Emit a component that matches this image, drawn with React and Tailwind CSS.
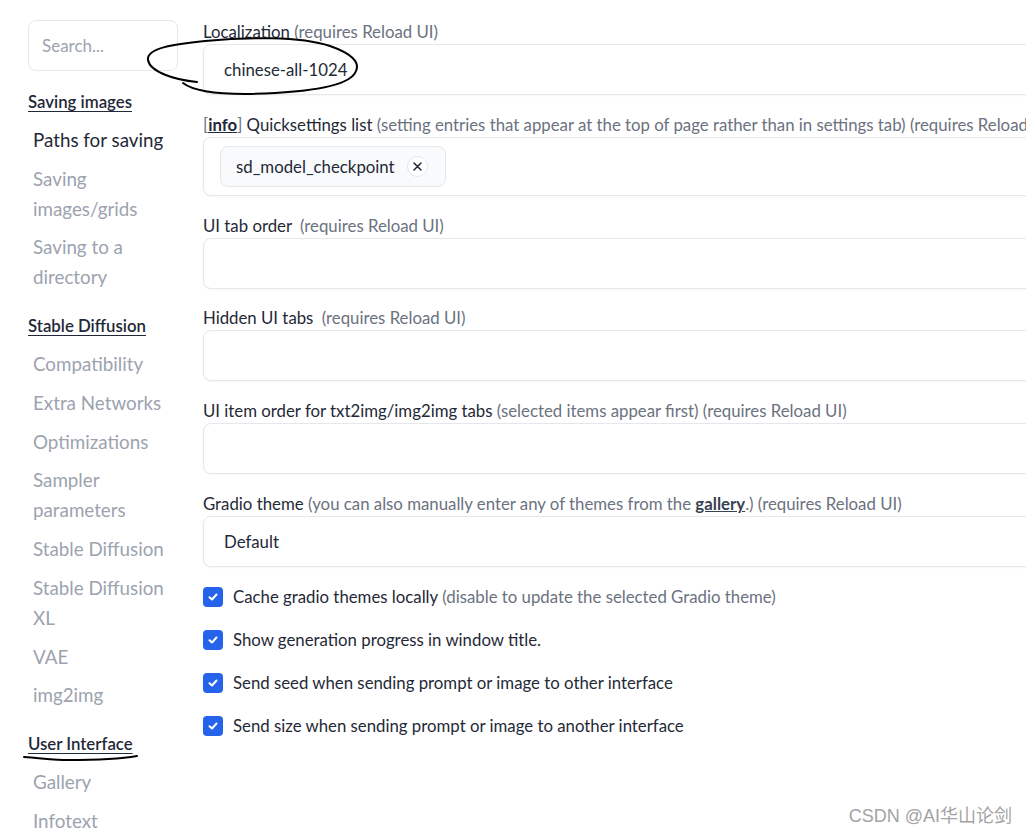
import React from 'react';

const font = { fontFamily: 'Lato, "Noto Sans", sans-serif' };

const Hint = ({ children, className = '' }) => (
  <span className={`text-[#6b7280] ${className}`}>{children}</span>
);

const Field = ({ label, children, tall }) => (
  <div className="mb-[17.8px]">
    <div className="h-[24px] leading-[24px] text-[16.8px] text-[#1f2937] whitespace-nowrap">{label}</div>
    <div
      className={`${tall ? 'h-[59px]' : 'h-[51px]'} w-[880px] rounded-lg border border-[#e5e7eb] bg-white shadow-[0_1px_2px_rgba(0,0,0,0.04)] flex items-center px-[20px] text-[16.8px] text-[#1f2937]`}
    >
      {children}
    </div>
  </div>
);

const Check = ({ children }) => (
  <label className="flex items-center gap-[10px] h-[43px] text-[16.8px] text-[#1f2937] whitespace-nowrap">
    <span className="w-[20px] h-[20px] rounded-[4px] bg-[#2563eb] flex items-center justify-center shrink-0">
      <svg width="12" height="12" viewBox="0 0 12 12" fill="none">
        <path d="M2.5 6.2 L5 8.5 L9.5 3.5" stroke="white" strokeWidth="2" strokeLinecap="round" strokeLinejoin="round" />
      </svg>
    </span>
    {children}
  </label>
);

const SideHead = ({ children, first }) => (
  <div className={`${first ? '' : 'mt-[22px]'} h-[24px] leading-[24px] text-[16.8px] font-semibold text-[#1f2937] underline underline-offset-[3px]`}>
    {children}
  </div>
);

const SideItem = ({ children, active }) => (
  <div className={`pl-[5px] w-[148px] mt-[8.7px] first:mt-[11px] leading-[30px] text-[18.8px] ${active ? 'text-[#1f2937]' : 'text-[#9ca3af]'}`}>
    {children}
  </div>
);

export default function App() {
  return (
    <div className="relative w-[1026px] h-[836px] overflow-hidden bg-white flex" style={font}>
      <aside className="w-[203px] shrink-0 pl-[28px] pt-[20px]">
        <div className="w-[150px] h-[51px] rounded-lg border border-[#e5e7eb] flex items-center px-[13px] text-[17px] text-[#9ca3af]">
          Search...
        </div>
        <div className="mt-[19px]">
          <SideHead first>Saving images</SideHead>
          <div>
            <SideItem active>Paths for saving</SideItem>
            <SideItem>Saving images/grids</SideItem>
            <SideItem>Saving to a directory</SideItem>
          </div>
          <SideHead>Stable Diffusion</SideHead>
          <div>
            <SideItem>Compatibility</SideItem>
            <SideItem>Extra Networks</SideItem>
            <SideItem>Optimizations</SideItem>
            <SideItem>Sampler parameters</SideItem>
            <SideItem>Stable Diffusion</SideItem>
            <SideItem>Stable Diffusion XL</SideItem>
            <SideItem>VAE</SideItem>
            <SideItem>img2img</SideItem>
          </div>
          <SideHead>User Interface</SideHead>
          <div>
            <SideItem>Gallery</SideItem>
            <SideItem>Infotext</SideItem>
          </div>
        </div>
      </aside>

      <main className="flex-1 pt-[20px] min-w-0">
        <Field label={<>Localization <Hint>(requires Reload UI)</Hint></>}>chinese-all-1024</Field>
        <Field
          tall
          label={
            <>
              <Hint>[</Hint>
              <span className="font-bold underline">info</span>
              <Hint>]</Hint> Quicksettings list{' '}
              <Hint>(setting entries that appear at the top of page rather than in settings tab) (requires Reload UI)</Hint>
            </>
          }
        >
          <span className="-ml-[4px] flex items-center gap-[12px] h-[41px] pl-[15px] pr-[17px] rounded-lg border border-[#e5e7eb] bg-[#f9fafb]">
            sd_model_checkpoint
            <span className="w-[21px] h-[21px] rounded-full border border-[#e5e7eb] bg-white flex items-center justify-center">
              <svg width="9" height="9" viewBox="0 0 9 9">
                <path d="M1 1 L8 8 M8 1 L1 8" stroke="#1f2937" strokeWidth="1.5" strokeLinecap="round" />
              </svg>
            </span>
          </span>
        </Field>
        <Field label={<>UI tab order <Hint className="ml-[4px]">(requires Reload UI)</Hint></>} />
        <Field label={<>Hidden UI tabs <Hint className="ml-[4px]">(requires Reload UI)</Hint></>} />
        <Field label={<>UI item order for txt2img/img2img tabs <Hint>(selected items appear first) (requires Reload UI)</Hint></>} />
        <Field
          label={
            <>
              Gradio theme{' '}
              <Hint>
                (you can also manually enter any of themes from the{' '}
                <span className="font-bold underline text-[#374151]">gallery</span>.) (requires Reload UI)
              </Hint>
            </>
          }
        >
          Default
        </Field>
        <div className="mt-[-9.5px]">
          <Check>
            Cache gradio themes locally <Hint className="-ml-[6px]">(disable to update the selected Gradio theme)</Hint>
          </Check>
          <Check>Show generation progress in window title.</Check>
          <Check>Send seed when sending prompt or image to other interface</Check>
          <Check>Send size when sending prompt or image to another interface</Check>
        </div>
      </main>

      {/* hand-drawn marks */}
      <svg className="absolute left-0 top-0 pointer-events-none" width="1026" height="836" fill="none">
        <path
          d="M197 82 C175 80 150 72 148 60 C146 48 175 44 205 41 C245 37 300 36 330 46 C350 53 362 62 355 73 C346 88 300 93 245 94 C215 94 192 90 183 83"
          stroke="#000"
          strokeWidth="2"
          strokeLinecap="round"
        />
        <path d="M24 757 C40 758 55 760 68 760 C95 760 120 759 137 756" stroke="#000" strokeWidth="2" strokeLinecap="round" />
      </svg>

      <div
        className="absolute right-[14px] bottom-[6px] text-[18px] text-[#a3a3a3] [text-shadow:0_0_1px_rgba(255,255,255,0.9)]"
        style={{ fontFamily: '"Liberation Sans", "Noto Sans CJK SC", sans-serif' }}
      >
        CSDN @AI华山论剑
      </div>
    </div>
  );
}
